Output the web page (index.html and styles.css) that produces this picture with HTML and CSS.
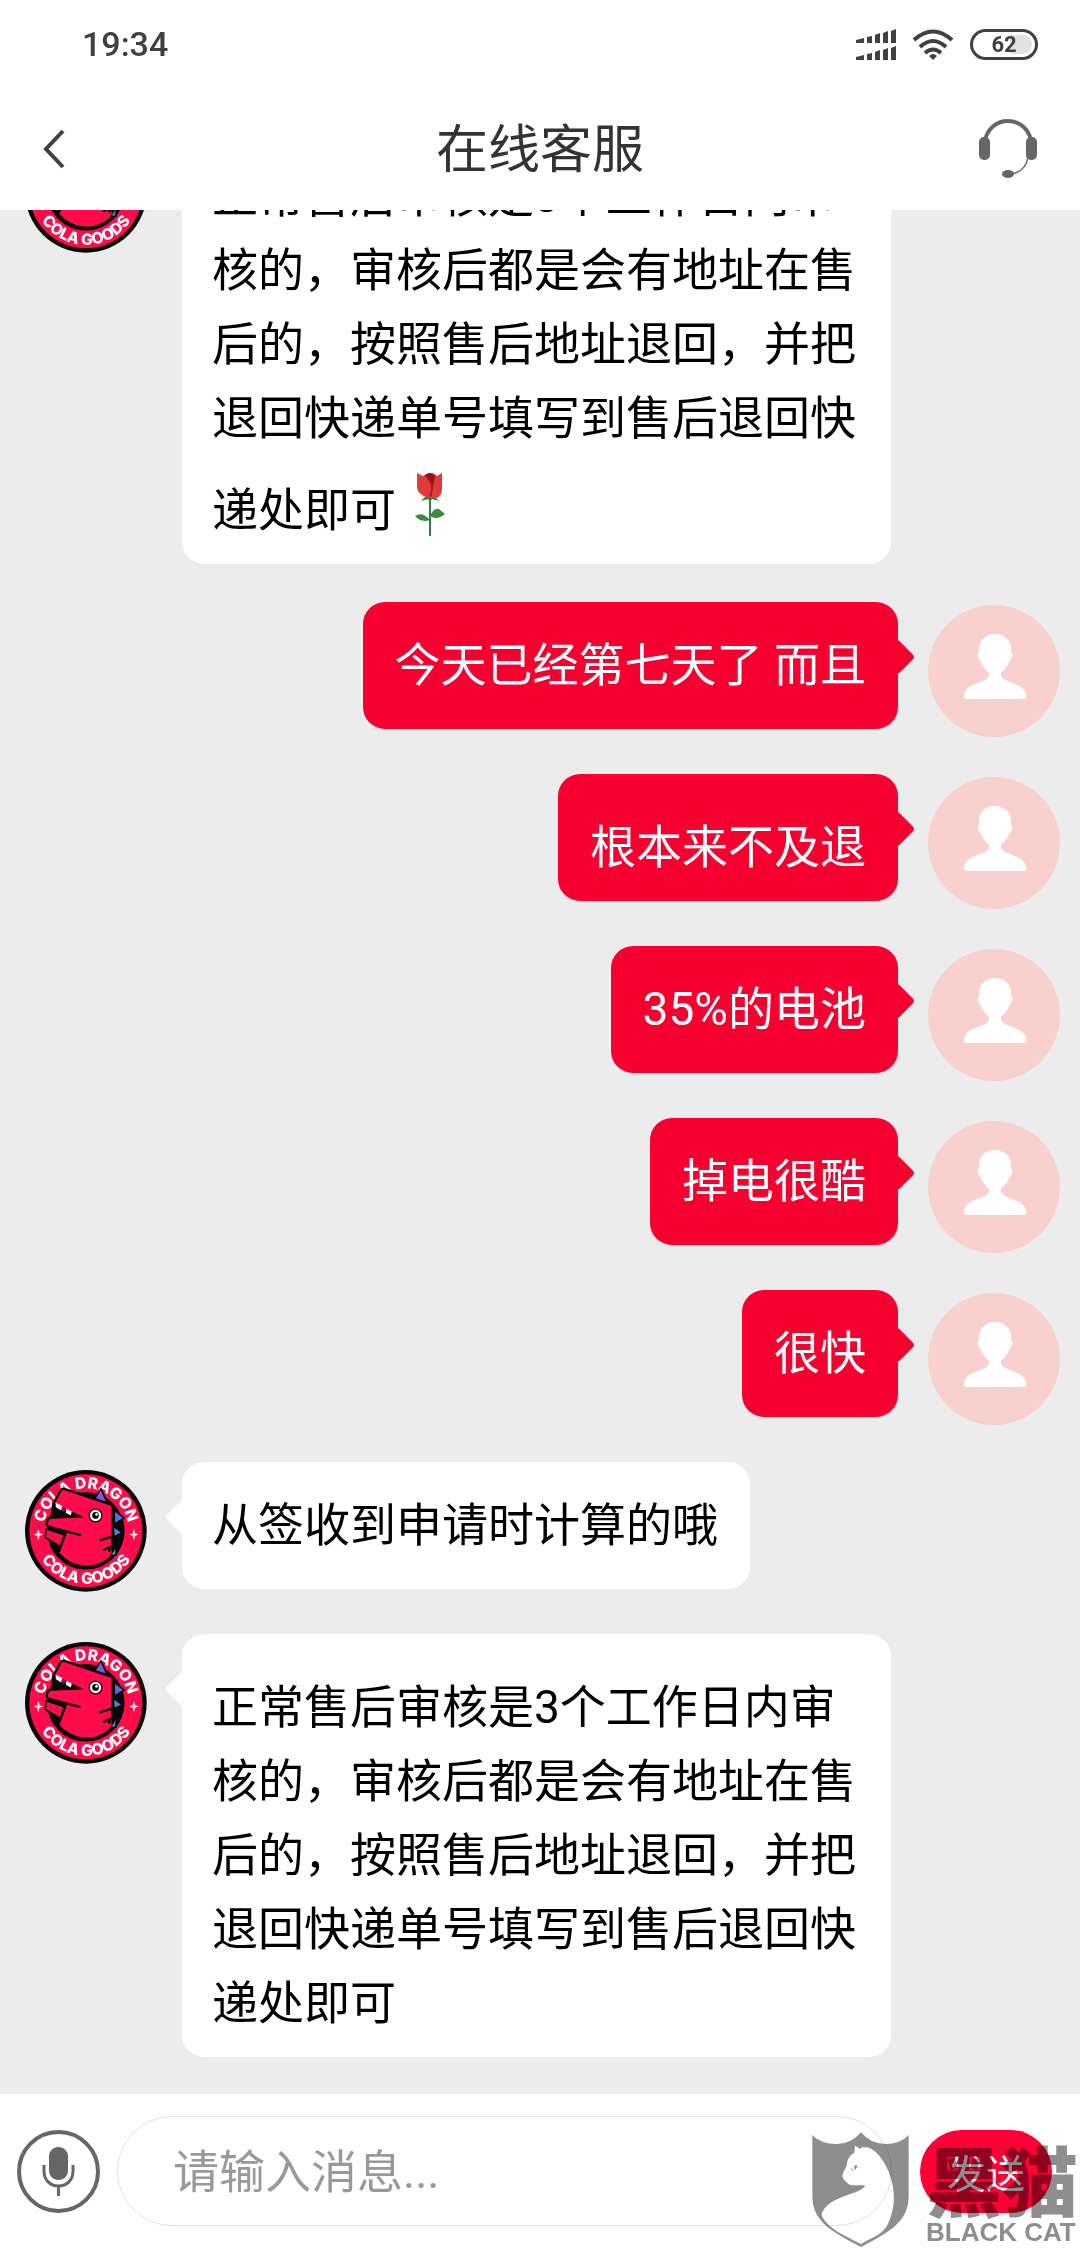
FILE: index.html
```html
<!DOCTYPE html>
<html lang="zh-CN">
<head>
    <meta charset="UTF-8">
    <meta name="viewport" content="width=device-width, initial-scale=1.0">
    <title>在线客服</title>
    <link rel="stylesheet" href="styles.css">
</head>
<body>
<!-- shared icons -->
<svg class="defs" width="0" height="0">
    <defs>
        <path id="arcTop" d="M139 315A127 127 0 1 1 378 315"/>
        <path id="arcBottom" d="M100 272a158 158 0 0 0 317 0"/>
        <symbol id="dragon" viewBox="76 90 365 365">
            <circle cx="258" cy="272" r="182" fill="#0a0508"/>
            <circle cx="258" cy="272" r="169" fill="#ff0a4a"/>
            <text class="logo-text"><textPath href="#arcTop" startOffset="50%" text-anchor="middle">COLA DRAGON</textPath></text>
            <text class="logo-text"><textPath href="#arcBottom" startOffset="50%" text-anchor="middle">COLA GOODS</textPath></text>
            <path d="M116 266l4 13 10 4-10 4-4 13-4-13-10-4 10-4zM402 266l4 13 10 4-10 4-4 13-4-13-10-4 10-4z" fill="#ffd9e4"/>
            <circle cx="258" cy="272" r="116" fill="#0a0508"/>
            <g stroke="#0a0508" stroke-width="5" stroke-linejoin="round">
                <path d="M283 178l20-32 19 42z" fill="#7a5cd8"/>
                <path d="M343 210l30 24-30 18z" fill="#5a6be0"/>
                <path d="M340 258l28 20-26 12z" fill="#4a86d8"/>
                <path d="M330 345l20-28-2 28z" fill="#2f9ab0"/>
                <path d="M139 266l56 18-12 36-46-28z" fill="#f0104a"/>
            </g>
            <path d="M160 192l22-40q4-8 14-5l142 48v137l-10 18a103 103 0 0 1-150-14l20-58-50-18q-8-3-7-11l3-10q2-7 11-7z" fill="#ff0a4a"/>
            <path d="M160 192l22-40q4-8 14-5l142 48v137M197 280l-19 52M240 284l-92-24q-8-3-7-11l3-10q2-7 11-7" fill="none" stroke="#0a0508" stroke-width="7" stroke-linecap="round" stroke-linejoin="round"/>
            <path d="M160 190l86 40-92 4z" fill="#0a0508" stroke="#0a0508" stroke-width="4" stroke-linejoin="round"/>
            <path d="M168 188l20 10-4 13-16-10zM200 206l16 8-3 12-15-8z" fill="#fff"/>
            <path d="M187 200l11 6-4 10-8-4z" fill="#8a1550"/>
            <circle cx="287" cy="226" r="19" fill="#fff" stroke="#0a0508" stroke-width="4"/>
            <circle cx="287" cy="226" r="10" fill="#0a0508"/>
            <circle cx="290" cy="223" r="4" fill="#fff"/>
            <path d="M302 300l28-9 22 2-12 22-28 14M330 320l-2 12" fill="none" stroke="#0a0508" stroke-width="7" stroke-linecap="round"/>
        </symbol>
        <symbol id="person" viewBox="0 0 132 132">
            <circle cx="66" cy="66" r="66" fill="#f8d1cf"/>
            <path d="M67 29c-11 0-17 8-16 18-2 2-2 6 1 8 2 6 5 9 9 13 1 3-1 5-4 7-8 4-17 5-20 12-2 4-2 7 2 7h56c4 0 4-3 2-7-3-7-12-8-20-12-3-2-5-4-4-7 4-4 7-7 9-13 3-2 3-6 1-8 1-10-5-18-16-18z" fill="#fff"/>
        </symbol>
    </defs>
</svg>

<div class="app">
    <div class="status-bar">
        <span class="time">19:34</span>
        <div class="status-icons">
            <svg width="40" height="31" viewBox="0 0 40 31" fill="#404040">
                <path d="M0 11l8-2v5H0zM11 8l5-1v7h-5zM19 6l5-2v10h-5zM27 4l5-2v12h-5zM35 2l5-2v14h-5z"/>
                <path d="M0 28l8-2v5H0zM11 25l5-1v7h-5zM19 23l5-2v10h-5zM27 21l5-2v12h-5zM35 19l5-2v14h-5z"/>
            </svg>
            <svg width="42" height="31" viewBox="0 0 42 31" fill="none" stroke="#404040" stroke-width="5">
                <path d="M2 11Q21-6 40 11M8 18Q21 6 34 18M13 24q8-7 16 0" stroke-width="4"/>
                <path d="M21 31l-4-4q4-4 8 0z" fill="#404040" stroke="none"/>
            </svg>
            <span class="battery">62</span>
        </div>
    </div>

    <header class="header">
        <button class="icon-btn" aria-label="返回">
            <svg width="22" height="40" viewBox="0 0 22 40"><path d="M20 2L3 20l17 18" fill="none" stroke="#404040" stroke-width="4"/></svg>
        </button>
        <h1>在线客服</h1>
        <button class="icon-btn" aria-label="客服">
            <svg width="58" height="60" viewBox="0 0 58 60" fill="none" stroke="#666">
                <path d="M6 21C9 9 18 2 29 2s20 7 23 19" stroke-width="4"/>
                <rect x="0" y="18" width="11" height="23" rx="5" fill="#666" stroke="none"/>
                <rect x="47" y="18" width="11" height="23" rx="5" fill="#666" stroke="none"/>
                <path d="M49 38q-2 14-16 17" stroke-width="1.500"/>
                <ellipse cx="29" cy="55" rx="6" ry="4" fill="#666" stroke="none"/>
            </svg>
        </button>
    </header>

    <main class="chat">
        <div class="message agent with-emoji">
            <svg class="avatar"><use href="#dragon"/></svg>
            <div class="bubble long">正常售后审核是3个工作日内审核的，审核后都是会有地址在售后的，按照售后地址退回，并把退回快递单号填写到售后退回快递处即可<svg class="rose" width="68" height="86" viewBox="0 0 68 86">
                <path d="M34 43v38" stroke="#33803c" stroke-width="2"/>
                <path d="M34 65q-8-9-15-4 6 7 15 4zM34 61q4-9 9-7l6 5q-8 7-15 2z" fill="#3c8a44"/>
                <path d="M25 46l5-5h8l5 5-7-2-2 3-2-3z" fill="#3c7a34"/>
                <path d="M21 18l6 3 5-3h5l4 3 5-3v17q-1 6-5 8h-8q-11-3-12-10z" fill="#e23a38"/>
                <path d="M29 20l5-2 5 3-3 10z" fill="#8e1418"/>
                <path d="M29 20q10 7 5 22M39 20q-3 10-4 21" fill="none" stroke="#a81c20" stroke-width="1.500"/>
            </svg></div>
        </div>
        <div class="message user">
            <div class="bubble">今天已经第七天了 而且</div>
            <svg class="avatar"><use href="#person"/></svg>
        </div>
        <div class="message user">
            <div class="bubble long">根本来不及退</div>
            <svg class="avatar"><use href="#person"/></svg>
        </div>
        <div class="message user">
            <div class="bubble">35%的电池</div>
            <svg class="avatar"><use href="#person"/></svg>
        </div>
        <div class="message user">
            <div class="bubble">掉电很酷</div>
            <svg class="avatar"><use href="#person"/></svg>
        </div>
        <div class="message user">
            <div class="bubble">很快</div>
            <svg class="avatar"><use href="#person"/></svg>
        </div>
        <div class="message agent">
            <svg class="avatar"><use href="#dragon"/></svg>
            <div class="bubble">从签收到申请时计算的哦</div>
        </div>
        <div class="message agent">
            <svg class="avatar"><use href="#dragon"/></svg>
            <div class="bubble long">正常售后审核是3个工作日内审核的，审核后都是会有地址在售后的，按照售后地址退回，并把退回快递单号填写到售后退回快递处即可</div>
        </div>
    </main>

    <footer class="input-bar">
        <button class="icon-btn" aria-label="语音">
            <svg width="83" height="83" viewBox="0 0 83 83" fill="none" stroke="#666">
                <circle cx="41.500" cy="41.500" r="39.500" stroke-width="4"/>
                <rect x="32" y="17" width="19" height="33" rx="9" fill="#666" stroke="none"/>
                <path d="M27 35v6c0 9 6 15 14.500 15S56 50 56 41v-6M41.500 56v10" stroke-width="3"/>
            </svg>
        </button>
        <input type="text" class="message-input" placeholder="请输入消息..." aria-label="请输入消息">
        <button class="send-btn">发送</button>
    </footer>

    <div class="watermark">
        <svg width="98" height="116" viewBox="153 157 294 348">
            <path fill-rule="evenodd" fill="#8e8e8e" d="M154 167q26 26 73 26 44 0 73-35 29 35 73 35 44 0 70-26v178c0 75-40 103-143 157-103-54-146-82-146-157zM282 198c-2 8 0 14-3 22-14 7-20 22-22 37-3 10-12 22-13 32 3 12 12 20 22 26 18 5 32-1 47 3-20 30-112 27-132 87 20 46 80 66 119 88 35-20 70-30 83-65 22-50 20-102 0-152-14-32-33-60-57-71-9-3-17-3-24-2l-4 5zM271 262q5 10 5 13-7-4-5-13zM279 260q4-5 10-3 0 10-9 13z"/>
        </svg>
        <div class="watermark-text">
            <span class="cn">黑猫</span>
            <span class="en">BLACK CAT</span>
        </div>
    </div>
</div>
</body>
</html>
```
FILE: styles.css
```css
* {
    box-sizing: border-box;
}
body {
    margin: 0;
    font-family: Roboto, "Noto Sans CJK SC", sans-serif;
    background-color: #fff;
}
button {
    border: none;
    padding: 0;
    background: none;
    font-family: inherit;
    cursor: pointer;
}
svg {
    display: block;
    flex-shrink: 0;
}
.defs {
    position: absolute;
}
.logo-text {
    font-family: Inter, sans-serif;
    font-size: 47px;
    font-weight: 800;
    fill: #fff;
}
.app {
    position: relative;
    display: flex;
    flex-direction: column;
    height: 100vh;
    overflow: hidden;
}

/* status bar */
.status-bar {
    display: flex;
    justify-content: space-between;
    align-items: center;
    height: 88px;
    padding: 0 42px 0 82px;
    color: #404040;
}
.time {
    font-size: 34px;
    font-weight: 500;
}
.status-icons {
    display: flex;
    align-items: center;
    gap: 16px;
}
.battery {
    width: 68px;
    height: 31px;
    border: 3px solid #404040;
    border-radius: 16px;
    background: linear-gradient(to right, #fff 60%, #e2e2e2 60%) content-box;
    padding: 3px;
    font-size: 22px;
    font-weight: 700;
    line-height: 20px;
    text-align: center;
}

/* header */
.header {
    display: flex;
    justify-content: space-between;
    align-items: center;
    height: 122px;
    padding: 0 43px;
}
.header h1 {
    margin: 0 0 0 36px;
    padding-top: 4px;
    font-size: 52px;
    font-weight: 400;
    line-height: 52px;
    color: #333;
}

/* messages */
.chat {
    flex: 1;
    min-height: 0;
    display: flex;
    flex-direction: column;
    justify-content: flex-end;
    gap: 37px;
    padding-bottom: 37px;
    background-color: #ececec;
    overflow: hidden;
}
.message {
    display: flex;
    align-items: flex-start;
    flex-shrink: 0;
    min-height: 135px;
}
.with-emoji {
    margin-bottom: 1px;
}
.agent {
    gap: 35px;
    padding-left: 25px;
}
.user {
    justify-content: flex-end;
    gap: 30px;
    padding-right: 20px;
}
.agent .avatar {
    width: 122px;
    height: 122px;
    margin-top: 8px;
}
.user .avatar {
    width: 132px;
    height: 132px;
    margin-top: 3px;
}
.bubble {
    position: relative;
    max-width: 709px;
    padding: 26px 32px 27px;
    border-radius: 22px;
    font-size: 46px;
    line-height: 74px;
}
.bubble.long {
    padding-top: 36px;
    padding-bottom: 17px;
}
.agent .bubble {
    padding-left: 30px;
    background-color: #fff;
    color: #000;
}
.user .bubble {
    background-color: #f60030;
    color: #fff;
}
.bubble::before {
    content: "";
    position: absolute;
    top: 42px;
    width: 26px;
    height: 26px;
    border-radius: 4px;
    background-color: inherit;
    transform: rotate(45deg);
}
.agent .bubble::before {
    left: -12px;
}
.user .bubble::before {
    right: -12px;
}
.rose {
    display: inline-block;
    vertical-align: -15px;
}

/* input bar */
.input-bar {
    display: flex;
    align-items: center;
    height: 154px;
    padding: 0 28px 0 17px;
}
.message-input {
    flex: 1;
    min-width: 0;
    height: 110px;
    margin: 0 28px 0 17px;
    padding: 2px 55px 0;
    border: 1px solid #e2e2e2;
    border-radius: 55px;
    background: none;
    font-family: inherit;
    font-size: 46px;
    color: #333;
}
.message-input::placeholder {
    color: #999;
}
.send-btn {
    width: 132px;
    height: 83px;
    border-radius: 42px;
    background-color: #ff0036;
    color: #fff;
    font-size: 39px;
}

/* watermark over the bottom right corner */
.watermark {
    position: absolute;
    right: 2px;
    bottom: 0;
    display: flex;
    align-items: flex-end;
    gap: 16px;
    color: #8e8e8e;
    mix-blend-mode: multiply;
    pointer-events: none;
}
.watermark-text {
    display: flex;
    flex-direction: column;
    white-space: nowrap;
}
.watermark .cn {
    font-family: "Noto Sans CJK SC", sans-serif;
    font-size: 76px;
    font-weight: 900;
    line-height: 76px;
}
.watermark .en {
    font-family: "Liberation Sans", sans-serif;
    font-size: 26px;
    font-weight: 700;
    line-height: 32px;
}
```
